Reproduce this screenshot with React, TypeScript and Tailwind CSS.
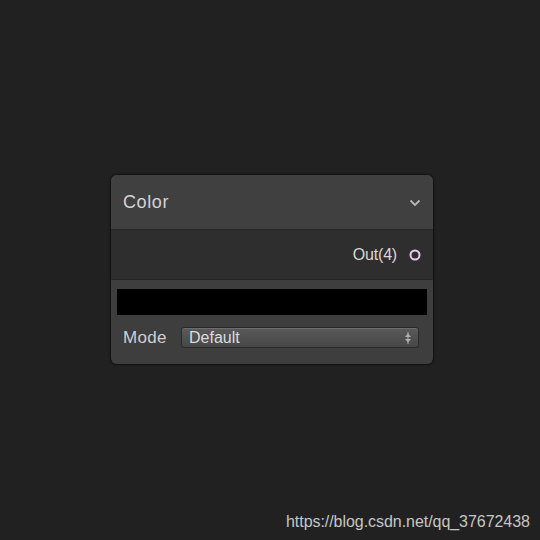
export default function App() {
  return (
    <div className="relative w-[540px] h-[540px] bg-[#212121] pt-[174px] pl-[110px] font-['Liberation_Sans',Arial,sans-serif]">
      <div className="w-[324px] rounded-[7px] border border-[#141414] bg-[#3e3e3e] overflow-hidden shadow-[0_0_2px_rgba(0,0,0,0.5)]">
        <div className="h-[55px] flex items-center justify-between pl-[12px] pr-[12px] bg-[#404040] border-b border-[#262626]">
          <span className="text-[18px] text-[#d4d4d4] tracking-[0.6px] mt-[1px]">Color</span>
          <svg width="12" height="8" viewBox="0 0 12 8" className="mt-[2px]">
            <path d="M1.5 1.5 L6 6 L10.5 1.5" fill="none" stroke="#b8b8b8" strokeWidth="1.8" />
          </svg>
        </div>
        <div className="h-[50px] flex items-center justify-end gap-[12px] pr-[12px] bg-[#2e2e2e] border-b border-[#262626]">
          <span className="text-[16px] text-[#d8d8d8] tracking-[-0.2px]">Out(4)</span>
          <svg width="12" height="12" viewBox="0 0 12 12">
            <circle cx="6" cy="6" r="4.5" fill="none" stroke="#f0c8f0" strokeWidth="2" />
          </svg>
        </div>
        <div className="px-[6px] pt-[9px] pb-[16px]">
          <div className="h-[26px] bg-black" />
          <div className="mt-[12px] flex items-center pl-[6px] pr-[8px]">
            <span className="w-[58px] text-[17px] leading-none text-[#cfcfcf] tracking-[0.3px]">Mode</span>
            <div className="flex-1 h-[21px] rounded-[3px] border border-[#2a2a2a] bg-gradient-to-b from-[#5a5a5a] to-[#474747] shadow-[inset_0_1px_0_rgba(255,255,255,0.12)] flex items-center justify-between pl-[7px] pr-[6px]">
              <span className="text-[16px] text-[#dcdcdc] leading-none">Default</span>
              <svg width="8" height="12" viewBox="0 0 8 12">
                <path d="M1 5 L4 1.5 L7 5 Z M1 7 L4 10.5 L7 7 Z" fill="#b0b0b0" />
                <rect x="3.5" y="0" width="1" height="12" fill="#b0b0b0" />
              </svg>
            </div>
          </div>
        </div>
      </div>
      <span className="absolute left-[286px] top-[510px] text-[16px] text-[#c6c6c6] tracking-[-0.05px]">
        https://blog.csdn.net/qq_37672438
      </span>
    </div>
  );
}
